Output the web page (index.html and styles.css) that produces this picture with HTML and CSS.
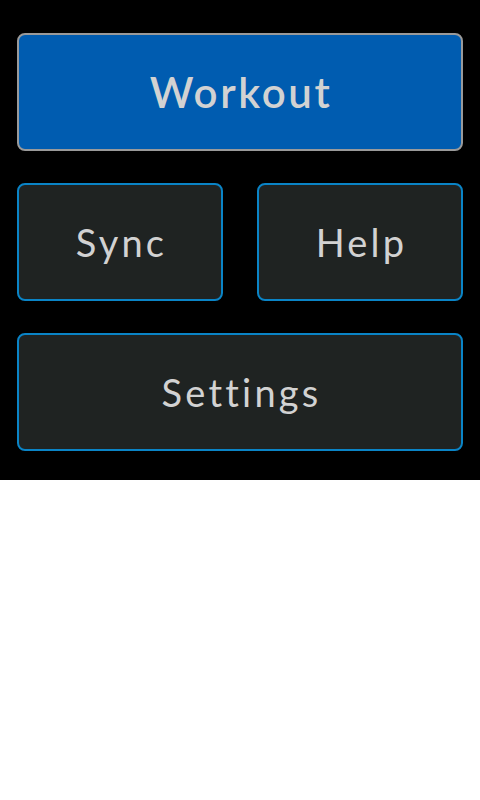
FILE: index.html
```html
<!DOCTYPE html>
<html lang="en">
<head>
    <meta charset="UTF-8">
    <meta name="viewport" content="width=device-width, initial-scale=1.0">
    <title>Menu</title>
    <link rel="stylesheet" href="styles.css">
</head>
<body>
    <div class="screen">
        <div class="menu">
            <button class="btn btn-primary wide">Workout</button>
            <button class="btn">Sync</button>
            <button class="btn">Help</button>
            <button class="btn wide">Settings</button>
        </div>
    </div>
</body>
</html>
```

FILE: styles.css
```css
:root {
    --screen-bg: #000000;
    --btn-bg: #1f2322;
    --btn-border: #0a84c6;
    --primary-bg: #005cb0;
    --primary-border: #9a9a9a;
    --text-color: #d2d2d2;
}

body {
    margin: 0;
    background: #ffffff;
    font-family: Lato, "Open Sans", sans-serif;
}

.screen {
    width: 480px;
    height: 480px;
    background: var(--screen-bg);
    box-sizing: border-box;
    padding: 33px 17px 0 17px;
}

.menu {
    display: grid;
    grid-template-columns: 206px 206px;
    grid-auto-rows: 118px;
    column-gap: 34px;
    row-gap: 32px;
}

.btn {
    background: var(--btn-bg);
    border: 2px solid var(--btn-border);
    border-radius: 8px;
    color: var(--text-color);
    font-family: inherit;
    font-size: 38px;
    font-weight: 400;
    letter-spacing: 3.2px;
    padding: 0 0 0 3px;
    margin: 0;
}

.wide {
    grid-column: 1 / 3;
}

.btn-primary {
    background: var(--primary-bg);
    border-color: var(--primary-border);
    font-size: 42px;
    font-weight: 600;
    letter-spacing: 2.6px;
    padding-left: 2px;
}
```
